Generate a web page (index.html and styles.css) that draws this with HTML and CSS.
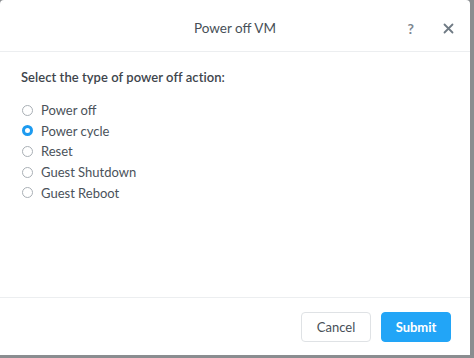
FILE: index.html
```html
<!DOCTYPE html>
<html>
<head>
<meta charset="utf-8">
<link rel="stylesheet" href="styles.css">
</head>
<body>
<div class="dialog">
  <div class="header">
    <div class="title">Power off VM</div>
    <div class="actions">
      <span class="help">?</span>
      <span class="close">
        <svg width="11" height="11" viewBox="0 0 11 11"><path d="M1.5 1.5 L9.5 9.5 M9.5 1.5 L1.5 9.5" stroke="#6f7a84" stroke-width="1.8" stroke-linecap="round"/></svg>
      </span>
    </div>
  </div>
  <div class="body">
    <div class="prompt">Select the type of power off action:</div>
    <ul class="options">
      <li><span class="radio"></span>Power off</li>
      <li><span class="radio checked"></span>Power cycle</li>
      <li><span class="radio"></span>Reset</li>
      <li><span class="radio"></span>Guest Shutdown</li>
      <li><span class="radio"></span>Guest Reboot</li>
    </ul>
  </div>
  <div class="footer">
    <button class="btn cancel">Cancel</button>
    <button class="btn submit">Submit</button>
  </div>
</div>
</body>
</html>
```
FILE: styles.css
```css
html, body {
  margin: 0;
  padding: 0;
  background: #8a8d90;
  width: 474px;
  height: 358px;
  overflow: hidden;
  font-family: "Lato", "Open Sans", sans-serif;
}
.dialog {
  width: 470px;
  height: 355px;
  background: #fff;
  border-radius: 4px 4px 0 0;
  display: flex;
  flex-direction: column;
}
.header {
  height: 52px;
  border-bottom: 1px solid #eceef0;
  display: flex;
  align-items: center;
  justify-content: center;
  position: relative;
  box-sizing: border-box;
}
.title {
  font-size: 13.5px;
  color: #474f57;
  padding-top: 4px;
}
.actions {
  position: absolute;
  right: 16px;
  top: 20px;
  display: flex;
  align-items: center;
  gap: 29px;
}
.help {
  font-size: 14px;
  font-weight: 700;
  color: #7d8790;
}
.close {
  display: flex;
}
.body {
  flex: 1;
  padding: 16px 21px 0;
  border-bottom: 1px solid #eceef0;
}
.prompt {
  font-size: 13px;
  font-weight: 600;
  color: #3e454c;
  line-height: 18px;
  letter-spacing: 0.05px;
}
.options {
  list-style: none;
  margin: 14px 0 0;
  padding: 0;
}
.options li {
  display: flex;
  align-items: center;
  height: 20.6px;
  font-size: 13px;
  color: #4a525a;
}
.radio {
  width: 9px;
  height: 9px;
  border: 1px solid #a9afb5;
  border-radius: 50%;
  margin-right: 8px;
  margin-left: 1px;
  box-sizing: content-box;
}
.radio.checked {
  border: 3px solid #1d9bf0;
  width: 5px;
  height: 5px;
  background: #fff;
}
.footer {
  height: 57px;
  display: flex;
  justify-content: flex-end;
  align-items: flex-start;
  padding: 14px 19px 0 0;
  gap: 10px;
  box-sizing: border-box;
}
.btn {
  width: 70px;
  height: 30px;
  border-radius: 4px;
  font-family: inherit;
  font-size: 13px;
  cursor: pointer;
}
.cancel {
  background: #fff;
  border: 1px solid #dfe2e5;
  color: #474f57;
}
.submit {
  background: #22a5f7;
  border: 1px solid #22a5f7;
  color: #fff;
  font-weight: 700;
}
```
